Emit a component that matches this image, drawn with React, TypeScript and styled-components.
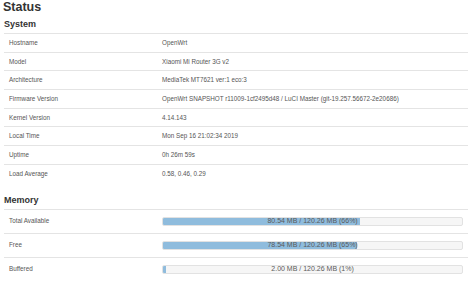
import styled, { createGlobalStyle } from 'styled-components'

const GlobalStyle = createGlobalStyle`
    html, body {
        margin: 0;
        padding: 0;
        background: #fff;
    }
    body {
        font-family: "Liberation Sans", Arial, sans-serif;
        color: #404040;
    }
`

const Page = styled.main`
    padding: 0 6px 0 4px;
`

const PageTitle = styled.h2`
    margin: 0 0 0 -1px;
    font-size: 12.5px;
    line-height: 14px;
    font-weight: bold;
    color: #333;
`

const SectionTitle = styled.h3<{ $top: number }>`
    margin: ${props => props.$top}px 0 3px;
    font-size: 9px;
    line-height: 11px;
    font-weight: bold;
    color: #333;
`

const Table = styled.div`
    display: flex;
    flex-direction: column;
`

const Row = styled.div<{ $height: number }>`
    display: grid;
    grid-template-columns: 33% 1fr;
    align-items: center;
    box-sizing: border-box;
    height: ${props => props.$height}px;
    border-top: 1px solid #e4e4e4;
`

const Cell = styled.div`
    padding: 0 5px;
    font-size: 6.3px;
    line-height: 8px;
    white-space: nowrap;
    color: #555;
`

const Bar = styled.div`
    position: relative;
    box-sizing: border-box;
    height: 9px;
    border: 1px solid #e2e2e2;
    border-radius: 2px;
    background: #f6f6f6;
    overflow: hidden;
`

const Fill = styled.div`
    height: 100%;
    background: #8fbcdd;
`

const BarLabel = styled.span`
    position: absolute;
    inset: 0;
    display: flex;
    align-items: center;
    justify-content: center;
    font-size: 7px;
    color: #5a5a5a;
`

const system = [
    ['Hostname', 'OpenWrt'],
    ['Model', 'Xiaomi Mi Router 3G v2'],
    ['Architecture', 'MediaTek MT7621 ver:1 eco:3'],
    ['Firmware Version', 'OpenWrt SNAPSHOT r11009-1cf2495d48 / LuCI Master (git-19.257.56672-2e20686)'],
    ['Kernel Version', '4.14.143'],
    ['Local Time', 'Mon Sep 16 21:02:34 2019'],
    ['Uptime', '0h 26m 59s'],
    ['Load Average', '0.58, 0.46, 0.29'],
]

const memory = [
    { label: 'Total Available', used: '80.54 MB', pct: 66 },
    { label: 'Free', used: '78.54 MB', pct: 65 },
    { label: 'Buffered', used: '2.00 MB', pct: 1 },
]

const App = () => {
    return <>
        <GlobalStyle />
        <Page>
            <PageTitle>Status</PageTitle>

            <SectionTitle $top={5}>System</SectionTitle>
            <Table>
                {system.map(([label, value]) => (
                    <Row $height={18.7} key={label}>
                        <Cell>{label}</Cell>
                        <Cell>{value}</Cell>
                    </Row>
                ))}
            </Table>

            <SectionTitle $top={12}>Memory</SectionTitle>
            <Table>
                {memory.map(m => (
                    <Row $height={24} key={m.label}>
                        <Cell>{m.label}</Cell>
                        <Cell>
                            <Bar>
                                <Fill style={{ width: m.pct + '%' }} />
                                <BarLabel>{m.used} / 120.26 MB ({m.pct}%)</BarLabel>
                            </Bar>
                        </Cell>
                    </Row>
                ))}
            </Table>
        </Page>
    </>
}

export default App
